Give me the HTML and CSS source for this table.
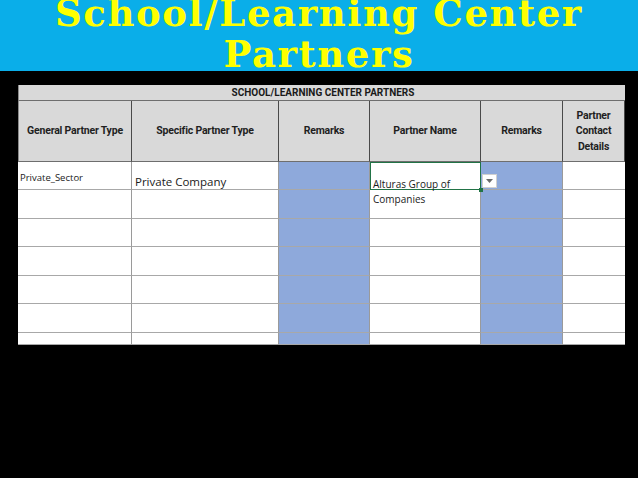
FILE: index.html
```html
<!DOCTYPE html>
<html>
<head>
<meta charset="utf-8">
<link rel="stylesheet" href="styles.css">
</head>
<body>
<header class="banner">
  <h1 class="title">School/Learning Center<br>Partners</h1>
</header>
<main class="stage">
  <div class="sheet">
    <div class="cap">SCHOOL/LEARNING CENTER PARTNERS</div>
    <div class="hd">General Partner Type</div>
    <div class="hd">Specific Partner Type</div>
    <div class="hd">Remarks</div>
    <div class="hd">Partner Name</div>
    <div class="hd">Remarks</div>
    <div class="hd">Partner<br>Contact<br>Details</div>

    <div class="c r1 gen">Private_Sector</div>
    <div class="c r1 spec">Private Company</div>
    <div class="c r1 blue"></div>
    <div class="c r1 name sel"><span class="name-text">Alturas Group of Companies</span><span class="handle"></span><span class="dd"><svg width="7" height="4" viewBox="0 0 7 4"><path d="M0 0h7L3.5 4z" fill="#6b6b6b"/></svg></span></div>
    <div class="c r1 blue"></div>
    <div class="c r1"></div>

    <div class="c"></div><div class="c"></div><div class="c blue"></div><div class="c notop"></div><div class="c blue"></div><div class="c"></div>
    <div class="c"></div><div class="c"></div><div class="c blue"></div><div class="c"></div><div class="c blue"></div><div class="c"></div>
    <div class="c"></div><div class="c"></div><div class="c blue"></div><div class="c"></div><div class="c blue"></div><div class="c"></div>
    <div class="c"></div><div class="c"></div><div class="c blue"></div><div class="c"></div><div class="c blue"></div><div class="c"></div>
    <div class="c"></div><div class="c"></div><div class="c blue"></div><div class="c"></div><div class="c blue"></div><div class="c"></div>
    <div class="c"></div><div class="c"></div><div class="c blue"></div><div class="c"></div><div class="c blue"></div><div class="c"></div>
  </div>
</main>
</body>
</html>
```
FILE: styles.css
```css
html, body {
  margin: 0;
  padding: 0;
  background: #000;
  width: 638px;
  height: 478px;
  overflow: hidden;
}

.banner {
  height: 71px;
  background: #0AAEE9;
  overflow: hidden;
  display: flex;
  flex-direction: column;
  justify-content: flex-end;
}

.title {
  margin: 0 0 -4px 0;
  font-family: "DejaVu Serif", serif;
  font-weight: bold;
  font-size: 37px;
  line-height: 41px;
  color: #FFFF00;
  text-align: center;
  letter-spacing: 1.6px;
}

.stage {
  padding: 14px 0 0 18px;
}

.sheet {
  width: 607px;
  display: grid;
  grid-template-columns: 114px 147px 91px 111px 82px 62px;
  grid-template-rows: 16px 61px 28px 29px 28px 29px 28px 29px 12px;
  background: #fff;
  font-family: "Open Sans", sans-serif;
  overflow: hidden;
}

.cap {
  grid-column: 1 / -1;
  background: #D9D9D9;
  border-bottom: 1px solid #6e6e6e;
  border-left: 1px solid #8a8a8a;
  font-family: Roboto, sans-serif;
  font-weight: bold;
  font-size: 10px;
  color: #1a1a1a;
  text-align: center;
  line-height: 15px;
  padding-left: 2px;
}

.hd {
  background: #D9D9D9;
  border-right: 1px solid #4a4a4a;
  border-bottom: 1px solid #6e6e6e;
  display: flex;
  align-items: center;
  justify-content: center;
  text-align: center;
  font-family: Roboto, sans-serif;
  font-weight: bold;
  font-size: 10.5px;
  line-height: 15.5px;
  color: #1f1f1f;
  letter-spacing: -0.2px;
}

.hd:nth-child(2) { border-left: 1px solid #8a8a8a; }
.hd:last-of-type { border-right: none; }

.c {
  border-right: 1px solid #9a9a9a;
  border-bottom: 1px solid #a8a8a8;
  background: #fff;
  font-size: 10px;
  color: #1a1a1a;
}

.c:nth-child(6n+7) { border-right: none; }

.blue { background: #8EA9DB; }

.gen {
  padding: 9px 0 0 2px;
  font-size: 9.5px;
  line-height: 14px;
}

.spec {
  display: flex;
  align-items: flex-end;
  padding: 0 0 0 3px;
  font-size: 11.5px;
  line-height: 14px;
}

.name {
  position: relative;
  z-index: 2;
  border: 1px solid #217346;
  background: #fff;
}

.name-text {
  display: block;
  padding: 14px 0 0 2px;
  width: 95px;
  font-size: 10px;
  line-height: 15px;
}

.handle {
  position: absolute;
  right: -3px;
  bottom: -3px;
  width: 4px;
  height: 4px;
  background: #217346;
}

.dd {
  position: absolute;
  left: 111px;
  top: 11px;
  width: 15px;
  height: 14px;
  background: #fff;
  border: 1px solid #d0d0d0;
  box-sizing: border-box;
  display: flex;
  align-items: center;
  justify-content: center;
}

.notop { background: #fff; }
```
